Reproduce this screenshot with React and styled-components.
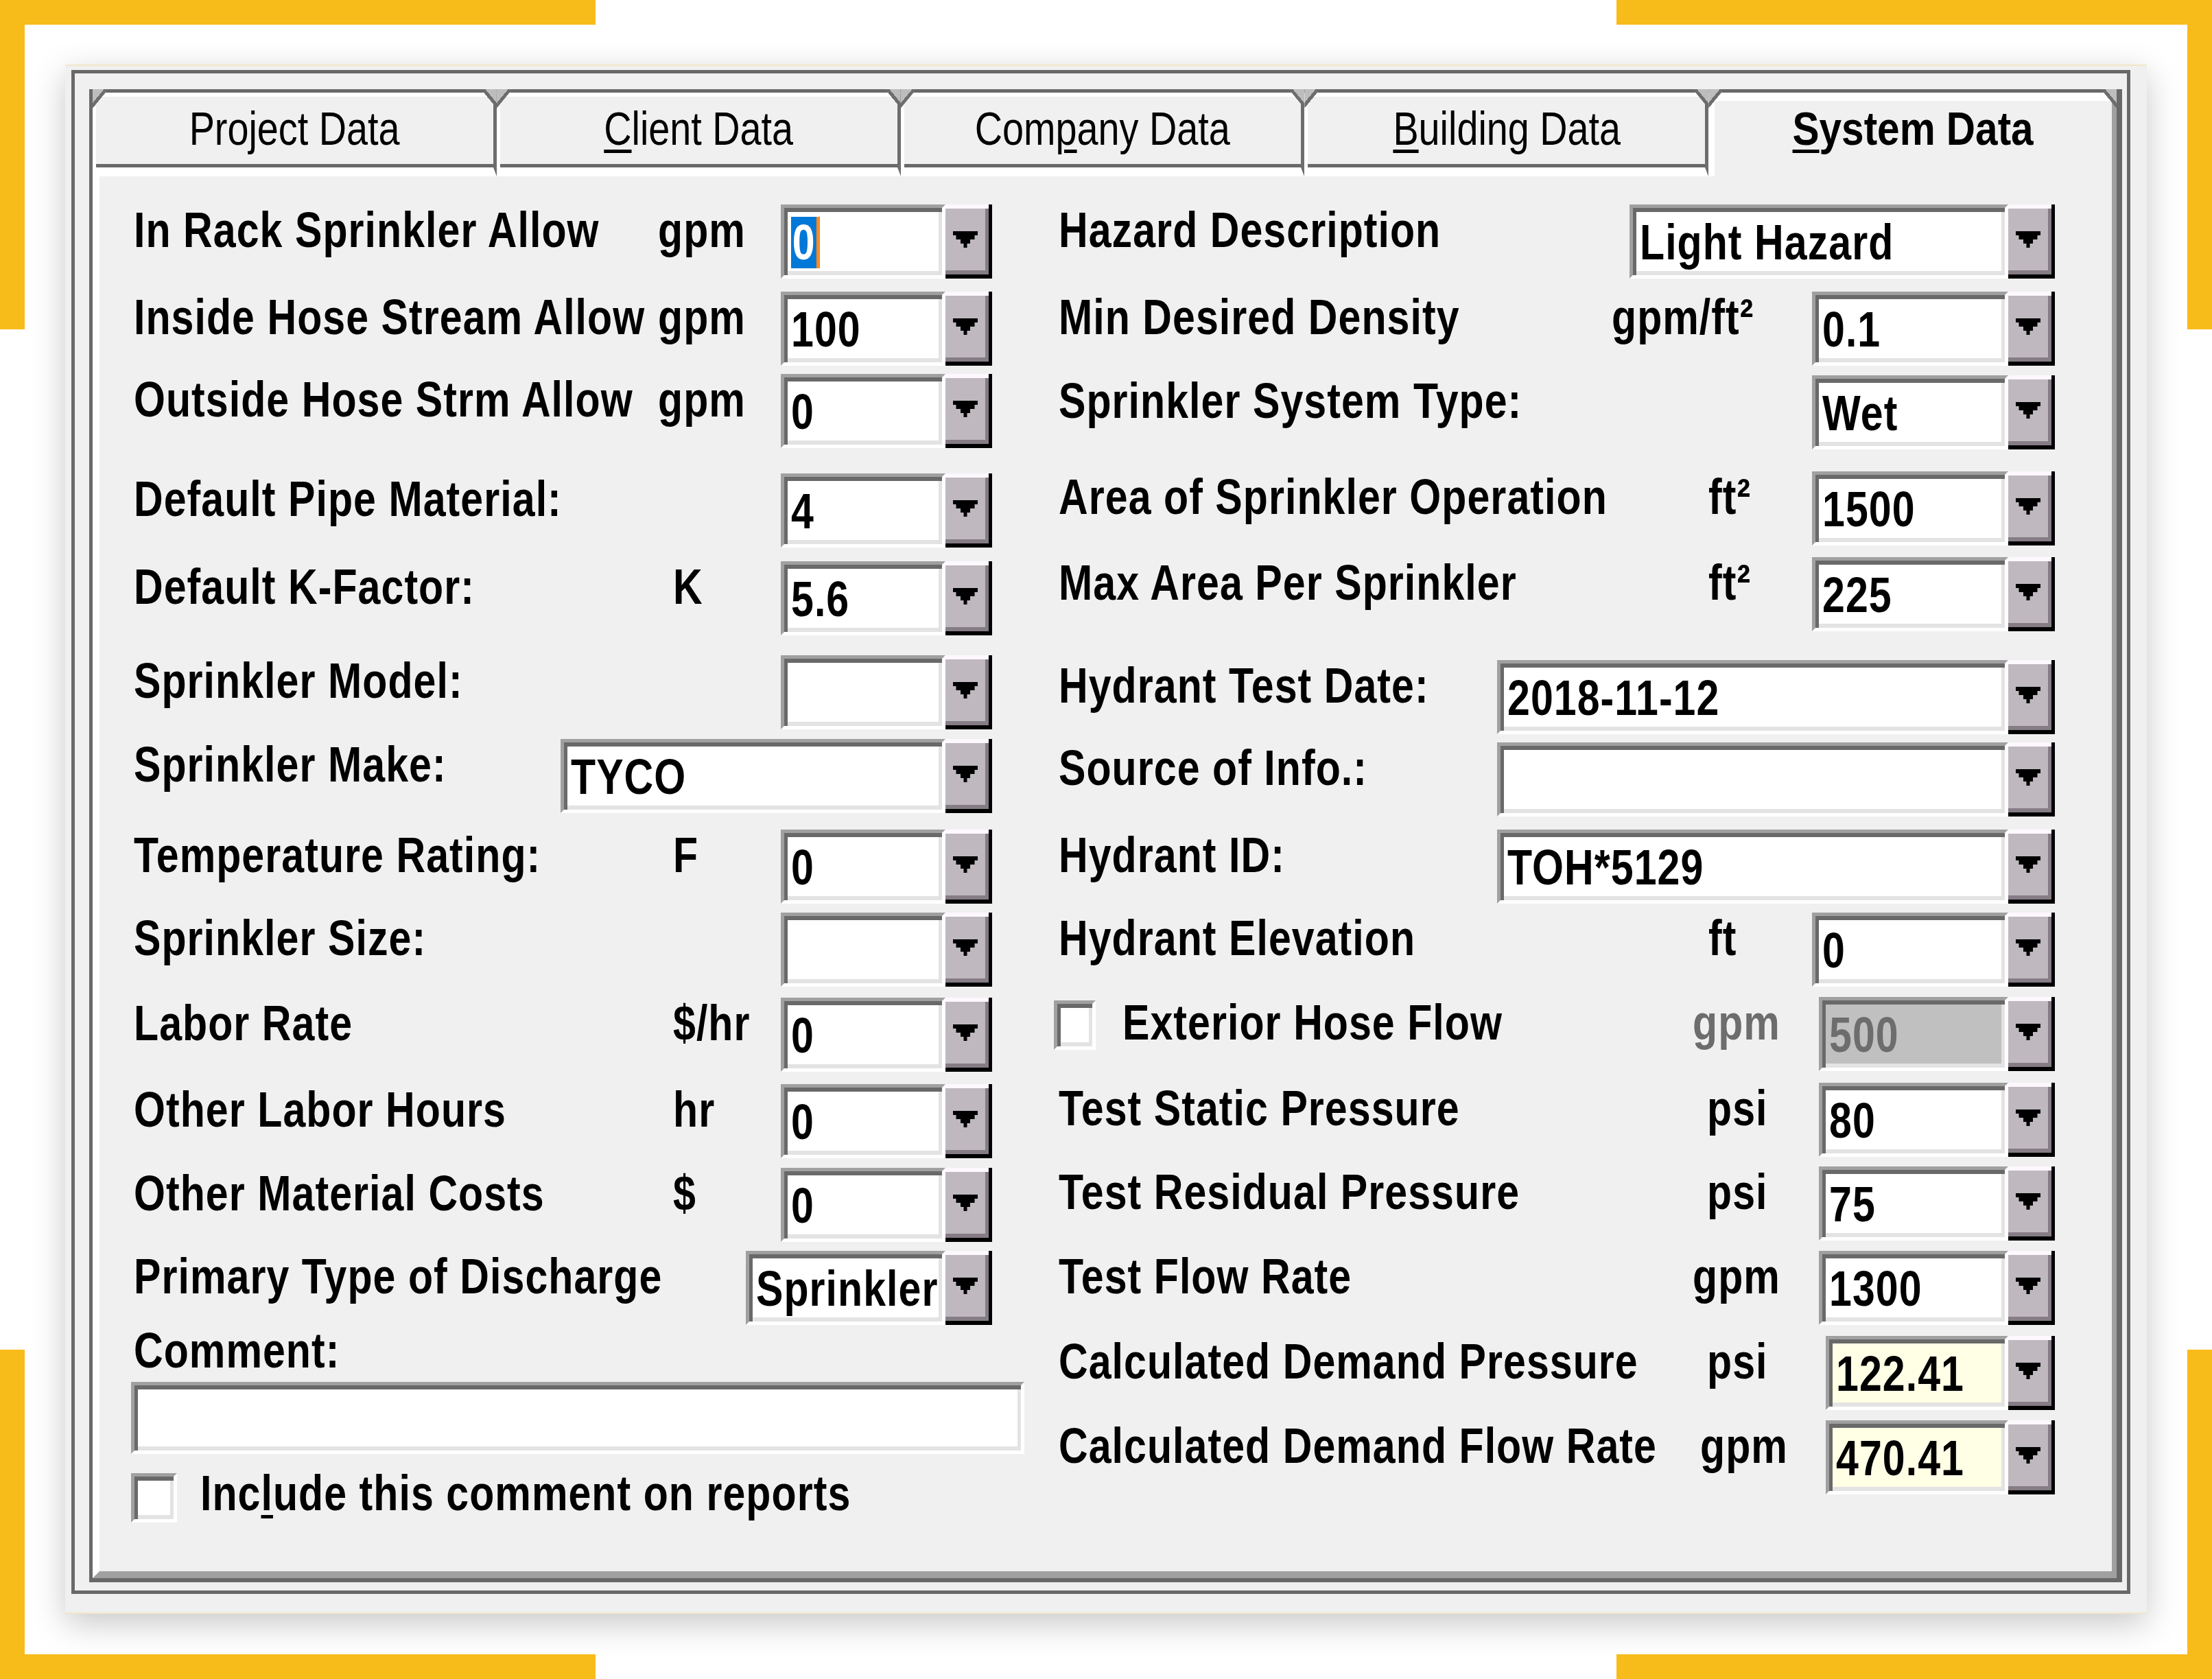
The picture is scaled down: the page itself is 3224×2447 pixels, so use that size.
import React from "react";
import styled, { createGlobalStyle } from "styled-components";

const FONT = `"Liberation Sans", Arial, sans-serif`;
// the dialog font is a narrow one; Liberation Sans squeezed to Arial Narrow widths
const NARROW = 0.82;

const GlobalStyle = createGlobalStyle`
  html, body {
    margin: 0;
    padding: 0;
    background: #fff;
  }
  body {
    font-family: ${FONT};
    color: #000;
  }
`;

const Page = styled.div`
  position: relative;
  width: 3224px;
  height: 2447px;
  box-sizing: border-box;
  padding: 94px 0 0 95px;
  overflow: hidden;
  background: #fff;
`;

// yellow frame brackets in the four corners
const Corner = styled.div`
  position: absolute;
  width: 868px;
  height: 480px;
  box-sizing: border-box;
  border: 0 solid #f7bc1a;
  ${({ $v }) => ($v === "top" ? "top: 0; border-top-width: 36px;" : "bottom: 0; border-bottom-width: 36px;")}
  ${({ $h }) => ($h === "left" ? "left: 0; border-left-width: 36px;" : "right: 0; border-right-width: 36px;")}
`;

const Panel = styled.div`
  width: 3034px;
  height: 2258px;
  box-sizing: border-box;
  background: #f0f0f0;
  border-top: 2px solid #f1e7c8;
  border-bottom: 2px solid #f1e7c8;
  box-shadow: 0 14px 45px rgba(0, 0, 0, 0.22);
  padding: 6px 24px 0 9px;
`;

const Window = styled.div`
  width: 3001px;
  height: 2221px;
  box-sizing: border-box;
  border: 5px solid #696969;
  padding: 23px 7px 12px 21px;
`;

const TabControl = styled.div`
  height: 100%;
  box-sizing: border-box;
  display: flex;
  flex-direction: column;
  border-top: 5px solid #696969;
  border-left: 5px solid #696969;
  border-right: 8px solid #696969;
  border-bottom: 6px solid #696969;
`;

const TabRow = styled.div`
  display: flex;
  height: 122px;
`;

const Tab = styled.div`
  position: relative;
  flex: 1;
  box-sizing: border-box;
  height: 122px;
  background: #f0f0f0;
  text-align: center;
  font-size: 68px;
  line-height: 76px;
  white-space: nowrap;
  font-weight: ${({ $active }) => ($active ? 700 : 400)};
  border-top: ${({ $active }) => ($active ? 12 : 6)}px solid #fff;
  border-left: ${({ $active }) => ($active ? 9 : 5)}px solid #fff;
  border-right: ${({ $active }) => ($active ? "7px solid #a0a0a0" : "5px solid #6d6d6d")};
  border-bottom: ${({ $active }) => ($active ? "0" : "13px solid #fff")};
  box-shadow: ${({ $active }) => ($active ? "none" : "inset 0 -5px 0 #696969")};
  padding-top: ${({ $active }) => ($active ? 2 : 8)}px;

  /* chamfered top corners */
  &::before,
  &::after {
    content: "";
    position: absolute;
    top: ${({ $active }) => ($active ? -17 : -11)}px;
    width: 23px;
    height: 28px;
  }
  &::before {
    left: ${({ $active }) => ($active ? -9 : -5)}px;
    background: linear-gradient(to bottom right, #bdbdbd 0 36%, #6d6d6d 36% 50%, transparent 50%);
    clip-path: polygon(0 0, 100% 0, 0 100%);
  }
  &::after {
    right: ${({ $active }) => ($active ? -7 : -5)}px;
    background: linear-gradient(to bottom left, #bdbdbd 0 36%, #6d6d6d 36% 50%, transparent 50%);
    clip-path: polygon(0 0, 100% 0, 100% 100%);
  }
`;

const TabText = styled.span`
  display: inline-block;
  transform: scaleX(${({ $active }) => ($active ? 0.86 : NARROW)});
  transform-origin: center;

  u {
    text-decoration-thickness: 5px;
    text-underline-offset: 7px;
  }
`;

const Body = styled.div`
  flex: 1;
  display: grid;
  grid-template-columns: 1251px 1452px;
  column-gap: 97px;
  align-items: start;
  padding: 0 0 0 50px;
  border-left: 10px solid #fff;
  border-right: 7px solid #a0a0a0;
  border-bottom: 10px solid #a0a0a0;
`;

const Column = styled.div`
  display: flex;
  flex-direction: column;
`;

const Row = styled.div`
  display: grid;
  grid-template-columns: ${({ $u, $c }) => `${$u}px ${$c - $u}px minmax(0, 1fr)`};
  align-items: start;
  height: 108px;
  margin-top: ${({ $gap }) => $gap}px;
`;

const Text = styled.div`
  font-size: 72px;
  font-weight: 700;
  line-height: 74px;
  letter-spacing: 1.3px;
  white-space: nowrap;
  color: ${({ $dim }) => ($dim ? "#6d6d6d" : "#000")};
  transform: scaleX(${NARROW});
  transform-origin: left center;

  u {
    text-decoration-thickness: 5px;
    text-underline-offset: 7px;
  }
`;

const Label = styled(Text)`
  grid-column: ${({ $span }) => ($span ? "1 / 3" : "1 / 2")};
`;

const Unit = styled(Text)`
  grid-column: 2 / 3;
`;

const CheckLabel = styled.div`
  grid-column: 1 / 2;
  display: flex;
  align-items: flex-start;
  gap: 39px;
  margin-left: -7px;
`;

const Combo = styled.div`
  grid-column: 3 / 4;
  display: flex;
  min-width: 0;
  height: 108px;
`;

const sunken = `
  box-sizing: border-box;
  border: 5px solid;
  border-color: #a0a0a0 #fff #fff #a0a0a0;
  box-shadow: inset 5px 6px 0 #696969, inset -5px -6px 0 #e3e3e3;
`;

const Edit = styled.div`
  ${sunken}
  flex: 1;
  min-width: 0;
  height: 108px;
  padding: 2px 0 0 10px;
  font-size: 72px;
  font-weight: 700;
  line-height: 96px;
  letter-spacing: 1.3px;
  white-space: nowrap;
  overflow: hidden;
  background: ${({ $tone }) =>
    $tone === "calc" ? "#ffffe6" : $tone === "off" ? "#c0c0c0" : "#fff"};
  color: ${({ $tone }) => ($tone === "off" ? "#6d6d6d" : "#000")};
`;

const Value = styled.span`
  display: inline-block;
  transform: scaleX(${NARROW});
  transform-origin: left center;
`;

const Selected = styled.span`
  display: inline-block;
  height: 75px;
  line-height: 75px;
  padding: 0 2px;
  background: #0078d7;
  color: #fff;
  border-right: 6px solid #ff8a1f;
`;

const DropButton = styled.div`
  box-sizing: border-box;
  flex: none;
  width: 68px;
  height: 108px;
  display: flex;
  align-items: center;
  justify-content: center;
  padding-right: 5px;
  background: #bfb8bf;
  border-right: 5px solid #000;
  border-bottom: 6px solid #000;
  box-shadow: inset 0 6px 0 #fdf8fd, inset -5px -6px 0 #857c85;
`;

const CheckBox = styled.div`
  ${sunken}
  flex: none;
  width: ${({ $w }) => $w}px;
  height: 72px;
  margin-top: ${({ $top }) => $top}px;
  background: #fff;
`;

const CommentLabel = styled(Text)``;

const CommentBox = styled.div`
  ${sunken}
  width: 1302px;
  height: 105px;
  margin: 9px 0 0 -4px;
  background: #fff;
`;

const IncludeRow = styled.div`
  display: flex;
  align-items: flex-start;
  gap: 34px;
  margin: 20px 0 0 -4px;
`;

const Arrow = () => (
  <svg width="36" height="24" viewBox="0 0 36 24">
    <path d="M0 0H36V6H31.5V12H25V18H20.5V24H15.5V18H11V12H4.5V6H0Z" fill="#000" />
  </svg>
);

const ComboBox = ({ value, tone, selected }) => (
  <Combo>
    <Edit $tone={tone}>
      <Value>{selected ? <Selected>{value}</Selected> : value}</Value>
    </Edit>
    <DropButton>
      <Arrow />
    </DropButton>
  </Combo>
);

const tabs = [
  { key: "project", label: <>Pro<u>j</u>ect Data</> },
  { key: "client", label: <><u>C</u>lient Data</> },
  { key: "company", label: <>Com<u>p</u>any Data</> },
  { key: "building", label: <><u>B</u>uilding Data</> },
  { key: "system", label: <><u>S</u>ystem Data</>, active: true },
];

const leftRows = [
  { gap: 41, label: "In Rack Sprinkler Allow", unit: "gpm", u: 764, c: 943, value: "0", selected: true },
  { gap: 19, label: "Inside Hose Stream Allow", unit: "gpm", u: 764, c: 943, value: "100" },
  { gap: 12, label: "Outside Hose Strm Allow", unit: "gpm", u: 764, c: 943, value: "0" },
  { gap: 37, label: "Default Pipe Material:", c: 943, value: "4" },
  { gap: 20, label: "Default K-Factor:", unit: "K", u: 786, c: 943, value: "5.6" },
  { gap: 29, label: "Sprinkler Model:", c: 943, value: "" },
  { gap: 14, label: "Sprinkler Make:", c: 622, value: "TYCO" },
  { gap: 24, label: "Temperature Rating:", unit: "F", u: 786, c: 943, value: "0" },
  { gap: 13, label: "Sprinkler Size:", c: 943, value: "" },
  { gap: 16, label: "Labor Rate", unit: "$/hr", u: 786, c: 943, value: "0" },
  { gap: 18, label: "Other Labor Hours", unit: "hr", u: 786, c: 943, value: "0" },
  { gap: 14, label: "Other Material Costs", unit: "$", u: 786, c: 943, value: "0" },
  { gap: 13, label: "Primary Type of Discharge", c: 892, value: "Sprinkler" },
];

const rightRows = [
  { gap: 41, label: "Hazard Description", c: 832, value: "Light Hazard" },
  { gap: 19, label: "Min Desired Density", unit: "gpm/ft²", u: 806, c: 1098, value: "0.1" },
  { gap: 14, label: "Sprinkler System Type:", c: 1098, value: "Wet" },
  { gap: 32, label: "Area of Sprinkler Operation", unit: "ft²", u: 947, c: 1098, value: "1500" },
  { gap: 17, label: "Max Area Per Sprinkler", unit: "ft²", u: 947, c: 1098, value: "225" },
  { gap: 42, label: "Hydrant Test Date:", c: 639, value: "2018-11-12" },
  { gap: 12, label: "Source of Info.:", c: 639, value: "" },
  { gap: 19, label: "Hydrant ID:", c: 639, value: "TOH*5129" },
  { gap: 13, label: "Hydrant Elevation", unit: "ft", u: 947, c: 1098, value: "0" },
  { gap: 15, label: "Exterior Hose Flow", check: true, unit: "gpm", u: 924, c: 1108, value: "500", tone: "off" },
  { gap: 17, label: "Test Static Pressure", unit: "psi", u: 945, c: 1108, value: "80" },
  { gap: 14, label: "Test Residual Pressure", unit: "psi", u: 945, c: 1108, value: "75" },
  { gap: 15, label: "Test Flow Rate", unit: "gpm", u: 924, c: 1108, value: "1300" },
  { gap: 16, label: "Calculated Demand Pressure", unit: "psi", u: 945, c: 1118, value: "122.41", tone: "calc" },
  { gap: 15, label: "Calculated Demand Flow Rate", unit: "gpm", u: 935, c: 1118, value: "470.41", tone: "calc" },
];

const FieldRow = ({ row }) => (
  <Row $gap={row.gap} $u={row.u ?? row.c} $c={row.c}>
    {row.check ? (
      <CheckLabel>
        <CheckBox $w={61} $top={5} />
        <Text>{row.label}</Text>
      </CheckLabel>
    ) : (
      <Label $span={!row.unit}>{row.label}</Label>
    )}
    {row.unit && <Unit $dim={row.tone === "off"}>{row.unit}</Unit>}
    <ComboBox value={row.value} tone={row.tone} selected={row.selected} />
  </Row>
);

export default function App() {
  return (
    <>
      <GlobalStyle />
      <Page>
        <Corner $v="top" $h="left" />
        <Corner $v="top" $h="right" />
        <Corner $v="bottom" $h="left" />
        <Corner $v="bottom" $h="right" />
        <Panel>
          <Window>
            <TabControl>
              <TabRow>
                {tabs.map((t) => (
                  <Tab key={t.key} $active={t.active}>
                    <TabText $active={t.active}>{t.label}</TabText>
                  </Tab>
                ))}
              </TabRow>
              <Body>
                <Column>
                  {leftRows.map((row) => (
                    <FieldRow key={row.label} row={row} />
                  ))}
                  <CommentLabel>Comment:</CommentLabel>
                  <CommentBox />
                  <IncludeRow>
                    <CheckBox $w={67} $top={8} />
                    <Text>
                      Inc<u>l</u>ude this comment on reports
                    </Text>
                  </IncludeRow>
                </Column>
                <Column>
                  {rightRows.map((row) => (
                    <FieldRow key={row.label} row={row} />
                  ))}
                </Column>
              </Body>
            </TabControl>
          </Window>
        </Panel>
      </Page>
    </>
  );
}
